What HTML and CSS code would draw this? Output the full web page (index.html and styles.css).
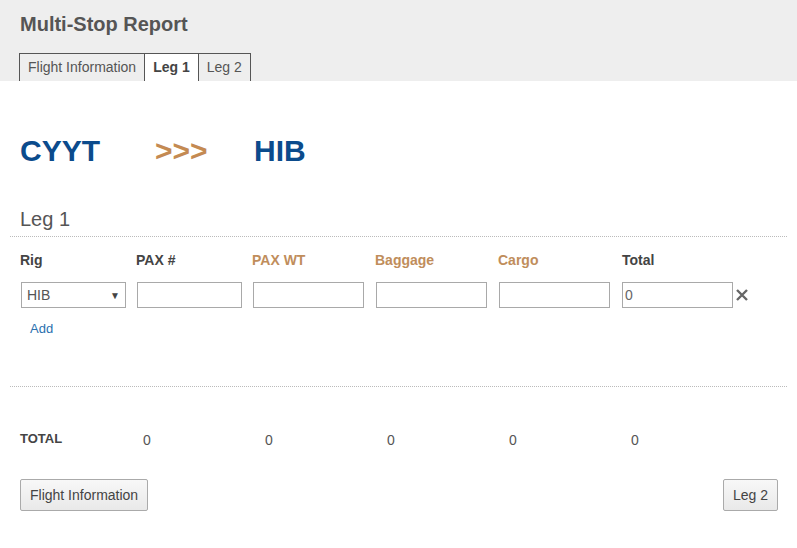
FILE: index.html
```html
<!DOCTYPE html>
<html>
<head>
<meta charset="utf-8">
<link rel="stylesheet" href="styles.css">
</head>
<body>
<div class="header">
  <h1 class="title">Multi-Stop Report</h1>
  <div class="tabs">
    <div class="tab">Flight Information</div>
    <div class="tab active">Leg 1</div>
    <div class="tab">Leg 2</div>
  </div>
</div>
<div class="main">
  <div class="route">
    <span class="from">CYYT</span>
    <span class="arrows">&gt;&gt;&gt;</span>
    <span class="to">HIB</span>
  </div>
  <h2 class="leg-title">Leg 1</h2>
  <div class="fields">
    <div class="row labels">
      <div class="col c-rig lbl">Rig</div>
      <div class="col c-pax lbl">PAX #</div>
      <div class="col c-w lbl accent">PAX WT</div>
      <div class="col c-w lbl accent">Baggage</div>
      <div class="col c-w lbl accent">Cargo</div>
      <div class="col c-w lbl">Total</div>
    </div>
    <div class="row inputs">
      <div class="col c-rig"><div class="select"><span>HIB</span><span class="caret">&#9660;</span></div></div>
      <div class="col c-pax"><div class="input narrow"></div></div>
      <div class="col c-w"><div class="input"></div></div>
      <div class="col c-w"><div class="input"></div></div>
      <div class="col c-w"><div class="input"></div></div>
      <div class="col c-w total-col"><div class="input val">0</div>
        <svg class="remove" width="14" height="14" viewBox="0 0 14 14"><path d="M2 2L12 12M12 2L2 12" stroke="#666" stroke-width="2.4" fill="none"/></svg>
      </div>
    </div>
    <a class="add">Add</a>
  </div>
  <div class="totals">
    <div class="t-label">TOTAL</div>
    <div class="t-val">0</div>
    <div class="t-val">0</div>
    <div class="t-val">0</div>
    <div class="t-val">0</div>
    <div class="t-val">0</div>
  </div>
  <div class="nav">
    <button class="btn">Flight Information</button>
    <button class="btn">Leg 2</button>
  </div>
</div>
</body>
</html>
```
FILE: styles.css
```css
* { box-sizing: border-box; }
body {
  margin: 0;
  font-family: "Liberation Sans", Arial, sans-serif;
  color: #555;
  background: #fff;
}
.header {
  background: #eeeeee;
  padding: 12px 0 0 19px;
  height: 81px;
}
.title {
  margin: 0 0 0 1px;
  font-size: 20px;
  line-height: 24px;
  font-weight: bold;
  color: #555;
}
.tabs {
  display: flex;
  margin-top: 17px;
}
.tab {
  border: 1px solid #555;
  border-bottom: none;
  border-right: none;
  height: 28px;
  line-height: 27px;
  padding: 0 8px;
  font-size: 14px;
  color: #555;
}
.tab:last-child { border-right: 1px solid #555; }
.tab.active {
  background: #fff;
  font-weight: bold;
  color: #444;
}
.main {
  padding: 0 10px;
}
.route {
  display: flex;
  align-items: baseline;
  padding: 52px 0 0 10px;
  font-size: 30px;
  font-weight: bold;
  line-height: 36px;
}
.from { color: #0b4b8c; width: 135px; }
.arrows { color: #c48a52; width: 99px; }
.to { color: #0b4b8c; }
.leg-title {
  margin: 37px 0 0 0;
  padding: 0 0 4px 10px;
  font-size: 20px;
  line-height: 26px;
  font-weight: normal;
  color: #555;
  border-bottom: 1px dotted #bbb;
}
.fields {
  padding: 14px 0 0 10px;
  height: 150px;
  border-bottom: 1px dotted #bbb;
}
.row { display: flex; }
.col { flex: none; }
.c-rig { width: 116px; }
.c-pax { width: 116px; }
.c-w { width: 123px; }
.lbl {
  font-size: 14px;
  font-weight: bold;
  color: #444;
  line-height: 18px;
}
.lbl.accent { color: #c08d5b; }
.labels .lbl:last-child { padding-left: 1px; }
.inputs { margin-top: 13px; }
.select {
  margin-left: 1px;
  width: 105px;
  height: 26px;
  border: 1px solid #a9a9a9;
  display: flex;
  align-items: center;
  justify-content: space-between;
  padding: 0 5px 0 5px;
  font-size: 14px;
  color: #555;
  background: #fff;
}
.caret { font-size: 10px; color: #444; }
.input {
  margin-left: 1px;
  width: 111px;
  height: 26px;
  border: 1px solid #a9a9a9;
  background: #fff;
  font-size: 14px;
  line-height: 24px;
  padding-left: 2px;
  color: #666;
}
.input.narrow { width: 105px; }
.total-col { display: flex; align-items: center; width: 140px; }
.remove { margin-left: 2px; }
.add {
  display: inline-block;
  margin: 13px 0 0 10px;
  font-size: 13px;
  color: #2a6fae;
}
.totals {
  display: flex;
  align-items: center;
  padding: 42px 0 0 10px;
  height: 64px;
}
.t-label {
  width: 123px;
  font-size: 13px;
  font-weight: bold;
  color: #444;
  margin-top: -3px;
}
.t-val {
  width: 122px;
  font-size: 14px;
  color: #555;
}
.nav {
  display: flex;
  justify-content: space-between;
  padding: 28px 9px 0 10px;
}
.btn {
  height: 32px;
  padding: 0 9px;
  font-family: "Liberation Sans", Arial, sans-serif;
  font-size: 14px;
  color: #444;
  border: 1px solid #aaa;
  border-radius: 2px;
  background: linear-gradient(#f8f8f8, #e9e9e9);
}
```
